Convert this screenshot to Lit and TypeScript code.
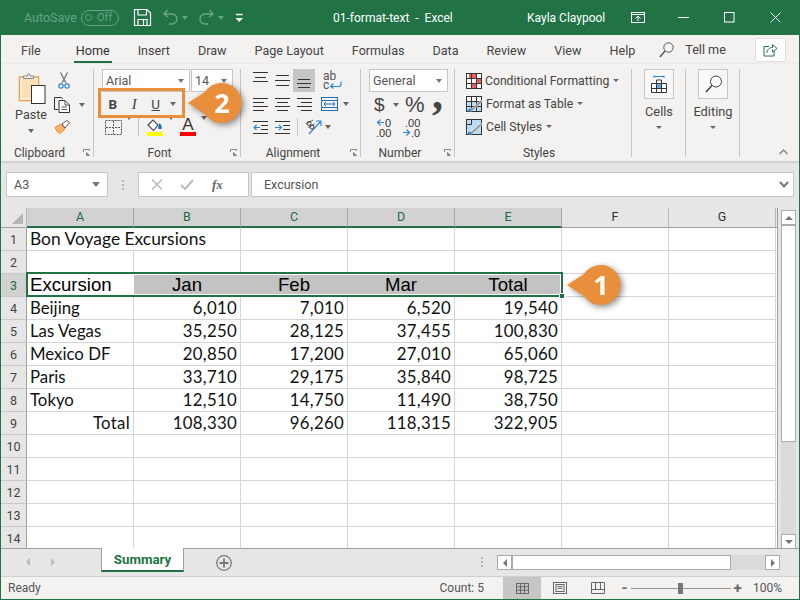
import { LitElement, html, css, svg } from "lit";
import { customElement } from "lit/decorators.js";

const icon = (w: number, h: number, body: unknown) =>
  html`<svg width=${w} height=${h} viewBox="0 0 ${w} ${h}" fill="none" stroke="#444" stroke-width="1">${body}</svg>`;

const lines = (rows: [number, number, number][]) =>
  rows.map(([y, a, b]) => svg`<path d="M${a} ${y + 0.5}H${b}" stroke="#333"/>`);

const I = {
  save: icon(17, 17, svg`<path d="M.5 .5H13L16.5 4V16.5H.5Z" stroke="#fff" stroke-width="1.2"/><path d="M4 .5V6H12.5V.5M4 16.5V10.5H13V16.5M9.5 11V16" stroke="#fff" stroke-width="1.2"/>`),
  undo: icon(15, 17, svg`<path d="M4.5 1 1 5 5 8M1.5 5H9A4.5 4.5 0 0 1 9 15H6" stroke="#6ea58a" stroke-width="1.3"/>`),
  redo: icon(15, 17, svg`<path d="M10.5 1 14 5 10 8M13.500 5H6A4.500 4.500 0 0 0 6 15H9" stroke="#6ea58a" stroke-width="1.3"/>`),
  qat: icon(9, 10, svg`<path d="M1 1.500H7.500" stroke="#fff" stroke-width="1.500"/><path d="M.5 5H8L4.200 9Z" fill="#fff" stroke="none"/>`),
  restore: icon(14, 11, svg`<rect x=".5" y=".5" width="13" height="10" stroke="#fff"/><path d="M1 2.500H13M7 9V4.500M4.500 6.500 7 4 9.500 6.500" stroke="#fff"/>`),
  min: icon(11, 11, svg`<path d="M0 5.500H11" stroke="#fff"/>`),
  max: icon(11, 11, svg`<rect x=".5" y=".5" width="9.500" height="9.500" stroke="#fff"/>`),
  close: icon(11, 11, svg`<path d="M.5 .5 10.500 10.500M10.500 .5 .5 10.500" stroke="#fff"/>`),
  search: icon(15, 16, svg`<circle cx="9.500" cy="5.500" r="4.700" stroke="#555"/><path d="M6 9 1 15" stroke="#555" stroke-width="1.400"/>`),
  share: icon(15, 14, svg`<path d="M6 3.500H1V13H11V8" stroke="#217346"/><path d="M4 10C4 6 7 4.500 9.500 4.500V1.500L14 5.500 9.500 9V6.500" stroke="#217346"/>`),
  paste: icon(29, 33, svg`<rect x="2.500" y="5" width="19" height="23.500" fill="#fff" stroke="#f0a04b" stroke-width="1.500"/><rect x="4.500" y="7" width="15" height="19.500" fill="#fbe0b5" stroke="none"/><path d="M6.500 6.500V4H10.500C10.500 .5 13 .5 13 4H16.500V6.500Z" fill="#f3f2f1" stroke="#888"/><rect x="14.500" y="13.500" width="13.500" height="18" fill="#fff" stroke="#333"/>`),
  cut: icon(12, 17, svg`<path d="M2.500 .5 8 11M9.500 .5 4 11" stroke="#666" stroke-width="1.100"/><circle cx="3" cy="14" r="2.200" stroke="#2b88d8" stroke-width="1.200"/><circle cx="9" cy="14" r="2.200" stroke="#2b88d8" stroke-width="1.200"/>`),
  copy: icon(17, 16, svg`<path d="M4 12.500H.5V.5H7.500L9 2" stroke="#333"/><path d="M5 3.500H11L15.500 8V15.500H5Z" fill="#fff" stroke="#333"/><path d="M11 4V8H15M7.500 10H13M7.500 12.500H13" stroke="#555"/>`),
  brush: icon(17, 15, svg`<path d="M1 8.500 7 5 11 10 6 14.500C4 14 2 11.500 1 8.500Z" fill="#f7b26b" stroke="#ee8a2e"/><path d="M8 5 13 1.500 15.500 3.500 11 9Z" fill="#fff" stroke="#555"/>`),
  borders: icon(17, 15, svg`<rect x=".5" y=".5" width="16" height="14" stroke="#555" stroke-dasharray="2 1"/><path d="M8.500 1V14M1 7.500H16" stroke="#555" stroke-dasharray="2 1"/>`),
  fill: icon(16, 13, svg`<path d="M1 6 6 1 11 6 6.500 11.500Z" fill="#fff" stroke="#444" stroke-width="1.100"/><path d="M12.500 4C14.500 6 15 8 14.500 10H11.500C11 8 11.500 6 12.500 4Z" fill="#106ebe" stroke="none"/>`),
  wrapArrow: icon(13, 8, svg`<path d="M12 .5V3C12 5 11 5.500 9.500 5.500H2M4.500 2.500 1.500 5.500 4.500 7.500" stroke="#2b88d8" stroke-width="1.200"/>`),
  merge: icon(17, 14, svg`<rect x=".5" y=".5" width="16" height="13" stroke="#1f6fb5"/><path d="M1 3.500H16M1 10.500H16" stroke="#1f6fb5"/><path d="M3 7H14M5 5 3 7 5 9M12 5 14 7 12 9" stroke="#1f6fb5"/>`),
  outdent: icon(15, 13, svg`${lines([[0, 0, 15], [4, 8, 15], [8, 8, 15], [12, 0, 15]])}<path d="M7 6.500H1M3.500 4 1 6.500 3.500 9" stroke="#2b88d8" stroke-width="1.200"/>`),
  indent: icon(15, 13, svg`${lines([[0, 0, 15], [4, 8, 15], [8, 8, 15], [12, 0, 15]])}<path d="M0 6.500H6.500M4 4 6.500 6.500 4 9" stroke="#2b88d8" stroke-width="1.200"/>`),
  orient: icon(18, 16, svg`<path d="M4 15 16 2M16 2H11M16 2V7" stroke="#2b88d8" stroke-width="1.200"/><path d="M1 5 8 1M3 8.500 9.500 5" stroke="#555"/><circle cx="4" cy="4.500" r="2" stroke="#444"/><circle cx="7" cy="8" r="2" stroke="#444"/>`),
  arrowL: icon(9, 9, svg`<path d="M8 4.500H1.500M4.500 1.500 1.500 4.500 4.500 7.500" stroke="#2b88d8" stroke-width="1.200"/>`),
  arrowR: icon(9, 9, svg`<path d="M1 4.500H7.500M4.500 1.500 7.500 4.500 4.500 7.500" stroke="#2b88d8" stroke-width="1.200"/>`),
  cond: icon(16, 16, svg`<rect x=".5" y=".5" width="15" height="15" fill="#fff" stroke="#333"/><path d="M3 1H10V5.500H3ZM10 5.500H15V10H10ZM5 10.500H10V15H5Z" fill="#ef5d5d" stroke="none"/><path d="M5.500 1V15M10.500 1V15M1 5.500H15M1 10.500H15" stroke="#333"/>`),
  table: icon(17, 16, svg`<rect x=".5" y=".5" width="15" height="15" fill="#fff" stroke="#333"/><path d="M1 5.500H15V15H1Z" fill="#bcdcf4" stroke="none"/><path d="M5.500 1V15M10.500 1V15M1 5.500H15M1 10.500H15" stroke="#333"/><path d="M3 15 15 4 16.500 5.500 6 15Z" fill="#8b8b8b" stroke="#fff" stroke-width=".5"/><path d="M1.500 15.500C2 13 3 13 4 12.500L5.500 14C5 15 3 15.500 1.500 15.500Z" fill="#2b88d8" stroke="none"/>`),
  styles: icon(17, 16, svg`<rect x=".5" y=".5" width="15" height="15" fill="#bcdcf4" stroke="#333"/><path d="M1 5.500H5.500V1" stroke="#333"/><path d="M3 15 15 4 16.500 5.500 6 15Z" fill="#8b8b8b" stroke="#fff" stroke-width=".5"/><path d="M1.500 15.500C2 13 3 13 4 12.500L5.500 14C5 15 3 15.500 1.500 15.500Z" fill="#2b88d8" stroke="none"/>`),
  cells: icon(16, 18, svg`<path d="M3 1.500H13M3 .5V3M13 .5V3" stroke="#2b88d8"/><rect x="5.500" y="8.500" width="5" height="5" fill="#63a9e6" stroke="none"/><path d="M5.500 5H10.500V8.500H5.500ZM.5 8.500H5.500V17.500H.5ZM10.500 8.500H15.500V17.500H10.500ZM5.500 13.500H10.500V17.500H5.500Z" fill="#fff" stroke="#333"/><path d="M.5 13.500H15.500" stroke="#333"/>`),
  find: icon(17, 18, svg`<circle cx="11" cy="6.500" r="5.500" stroke="#444"/><path d="M7 10.500 1 17" stroke="#444" stroke-width="1.500"/>`),
  launcher: icon(7, 7, svg`<path d="M.5 3V.5H6.500V2" stroke="#888"/><path d="M6.500 6.500H3.500V3.500L6.500 6.500" fill="#888" stroke="#888"/>`),
  x: icon(12, 11, svg`<path d="M1 .5 11 10.500M11 .5 1 10.500" stroke="#bbb" stroke-width="1.500"/>`),
  check: icon(14, 11, svg`<path d="M1 6 5 10 13 1" stroke="#bbb" stroke-width="2"/>`),
  chevron: icon(10, 7, svg`<path d="M1 1 5 5.500 9 1" stroke="#777" stroke-width="2"/>`),
  corner: icon(11, 11, svg`<path d="M11 0V11H0Z" fill="#b5b5b5" stroke="none"/>`),
  plus: icon(16, 16, svg`<circle cx="8" cy="8" r="7.300" stroke="#777" stroke-width="1.200"/><path d="M8 3.500V12.500M3.500 8H12.500" stroke="#777" stroke-width="1.800"/>`),
  collapse: icon(9, 6, svg`<path d="M.5 5 4.500 1 8.500 5" stroke="#888" stroke-width="1.500"/>`),
  normal: icon(13, 11, svg`<rect x=".5" y=".5" width="12" height="10" stroke="#666"/><path d="M4.500 1V10M8.500 1V10M1 3.800H12M1 7.200H12" stroke="#666"/>`),
  layout: icon(14, 12, svg`<rect x=".5" y=".5" width="13" height="11" stroke="#666"/><rect x="3" y="2.500" width="8" height="7" stroke="#666"/><path d="M4.500 4.500H9.500M4.500 6.500H9.500" stroke="#666"/>`),
  pagebreak: icon(14, 12, svg`<path d="M.5 7.500H13.500M.5 .5H13.500V11.500H.5ZM4.500 1V7M9.500 1V7" stroke="#666"/>`),
};

const rows: string[][] = [
  ["Bon Voyage Excursions"],
  [],
  ["Excursion", "Jan", "Feb", "Mar", "Total"],
  ["Beijing", "6,010", "7,010", "6,520", "19,540"],
  ["Las Vegas", "35,250", "28,125", "37,455", "100,830"],
  ["Mexico DF", "20,850", "17,200", "27,010", "65,060"],
  ["Paris", "33,710", "29,175", "35,840", "98,725"],
  ["Tokyo", "12,510", "14,750", "11,490", "38,750"],
  ["Total", "108,330", "96,260", "118,315", "322,905"],
  [], [], [], [], [],
];

@customElement("app-root")
export class AppRoot extends LitElement {
  static styles = css`
    :host { display: block; width: 800px; height: 600px; position: relative; overflow: hidden;
      font-family: Roboto, "Noto Sans", sans-serif; font-size: 12.5px; color: #444; background: #217346; white-space: nowrap; }
    svg { display: block; flex: none; overflow: visible; }
    .title { height: 35px; display: flex; align-items: center; color: #fff; padding-left: 24px; font-size: 12px; }
    .auto { color: #66a285; font-size: 12.5px; width: 50px; }
    .toggle { margin-left: 7px; width: 38px; height: 16px; box-sizing: border-box; border: 1px solid #66a285; border-radius: 8px;
      display: flex; align-items: center; gap: 5px; padding-left: 3px; color: #66a285; font-size: 11px; }
    .toggle i { width: 7px; height: 7px; border: 1px solid #66a285; border-radius: 50%; flex: none; box-sizing: border-box; }
    .m15 { margin-left: 15px; } .m13 { margin-left: 12px; }
    .caret { width: 0; height: 0; flex: none; border-left: 3.5px solid transparent; border-right: 3.5px solid transparent; border-top: 4px solid #666; }
    .title .caret { border-top-color: #66a285; margin-left: 4px; margin-right: 11px; }
    .doc { margin-left: 89px; width: 194px; white-space: pre; }
    .user { width: 104px; }
    .winbtn { width: 46px; display: flex; justify-content: center; }
    .winbtn.first { width: 29px; justify-content: flex-start; }

    .main { background: #e6e6e6; margin: 0 1px; height: 564px; display: flex; flex-direction: column; position: relative; }
    .tabs { height: 29px; flex: none; background: #f3f2f1; display: flex; align-items: center; gap: 28px; padding-left: 20px; position: relative; font-size: 12.6px; }
    .tab { line-height: 31px; height: 29px; box-sizing: border-box; }
    .tab.active { color: #333; margin-left: 7px; position: relative; }
    .tab.active::after { content: ""; position: absolute; left: -2px; right: -2px; bottom: 1px; height: 2px; background: #217346; }
    .tell { display: flex; align-items: center; gap: 11px; margin-left: -4px; }
    .shareBtn { margin-left: auto; margin-right: 13px; width: 31px; height: 24px; box-sizing: border-box; border: 1px solid #e1dfdd; border-radius: 2px; background: #fff; display: flex; align-items: center; justify-content: center; }

    .ribbon { height: 97px; flex: none; background: #f3f2f1; display: flex; box-shadow: 0 1px 3px rgba(0,0,0,.18); position: relative; z-index: 1; }
    .group { flex: none; box-sizing: border-box; display: flex; flex-direction: column; position: relative; padding-top: 5px; }
    .group::after { content: ""; position: absolute; right: 0; top: 5px; bottom: 4px; width: 1px; background: #c8c6c4; }
    .g-clip { width: 93px; } .g-font { width: 147px; } .g-align { width: 120px; } .g-num { width: 94px; } .g-styles { width: 177px; } .g-cells { width: 54px; } .g-edit { width: 54px; }
    .body { flex: 1; display: flex; flex-direction: column; }
    .glabel { height: 17px; display: flex; align-items: center; padding-right: 4px; font-size: 12px; }
    .glabel span { flex: 1; text-align: center; padding-right: 5px; }
    .rowi { display: flex; align-items: center; }

    .clipbody { flex-direction: row; padding-left: 11px; }
    .pastecol { width: 38px; display: flex; flex-direction: column; align-items: center; padding-top: 3px; }
    .pastecol .lbl { margin-top: 2px; line-height: 16px; }
    .pastecol .caret { margin-top: 6px; }
    .smallcol { display: flex; flex-direction: column; margin-left: 4px; }
    .s1 { margin: 3px 0 0 4px; } .s2 { margin-top: 8px; gap: 8px; } .s3 { margin-top: 6px; }

    .fontbody { padding-left: 8px; }
    .combo { background: #fff; border: 1px solid #c8c6c4; box-sizing: border-box; height: 23px; display: flex; align-items: center; justify-content: space-between; padding: 0 5px 0 3px; color: #555; }
    .combo .caret { border-top-color: #777; }
    .c-font { width: 88px; } .c-size { width: 42px; margin-left: 1px; }
    .biu { height: 24px; padding-left: 0; }
    .biu span { width: 21.5px; text-align: center; color: #444; font-size: 13.5px; }
    .biu .b { font-weight: 700; } .biu .i { font-style: italic; font-family: "Liberation Serif", serif; font-size: 15px; } .biu .u { text-decoration: underline; }
    .biu .caret { margin-left: 3px; }
    .fontrow3 { margin-top: 2px; padding-left: 3px; height: 18px; }
    .fontrow3 .bcaret { margin-left: 4px; }
    .vsep { width: 1px; height: 18px; background: #c8c6c4; flex: none; }
    .fontrow3 .vsep { margin-left: 6px; }
    .swatch { display: flex; flex-direction: column; width: 16px; }
    .swatch b { display: block; height: 4px; }
    .swatch .yellow { background: #ffff00; } .swatch .red { background: #ff0000; }
    .sfill { margin-left: 8px; } .sa { margin-left: 6px; } .swcaret { margin-left: 5px; }
    .ya { font-size: 17px; line-height: 14px; text-align: center; color: #333; font-family: "Liberation Sans", sans-serif; height: 14px; }
    .highlight { position: absolute; left: 4px; top: 24px; width: 87px; height: 30px; box-sizing: border-box; border: 3px solid #e98f3c; }

    .alignbody { padding-left: 12px; }
    .agrid { display: grid; grid-template-columns: repeat(4, 22px); grid-template-rows: 23px 24px 22px; align-items: center; justify-items: start; }
    .topa { align-self: start; margin-top: 3px; }
    .sel { background: #c8c6c4; width: 22px; height: 23px; margin-left: -4px; display: flex; align-items: flex-start; justify-content: center; padding-top: 10px; box-sizing: border-box; }
    .wrap { display: flex; flex-direction: column; line-height: 9px; color: #555; margin-left: 4px; font-size: 12px; }
    .wrapl { display: flex; align-items: center; line-height: 9px; }
    .mergeR { display: flex; align-items: center; gap: 5px; margin-left: 2px; }
    .sepcell { display: flex; align-items: center; gap: 7px; }
    .sepcell .caret { margin-left: -5px; }

    .numbody { padding-left: 8px; }
    .c-gen { width: 79px; }
    .numrow2 { height: 26px; padding-left: 5px; color: #444; font-family: "Liberation Sans", sans-serif; }
    .dollar { font-size: 19px; width: 19px; } .pct { font-size: 22px; margin-left: 6px; width: 27px; }
    .comma { font-size: 44px; font-weight: 700; line-height: 14px; font-family: "Liberation Serif", serif; margin-top: -20px; }
    .numrow3 { padding-left: 7px; gap: 7px; }
    .dec { display: grid; grid-template-columns: 9px auto; font-size: 11px; line-height: 10px; color: #333; width: 19px; font-family: "Liberation Sans", sans-serif; }
    .dec .full { grid-column: 1 / 3; }

    .stylebody { padding-left: 11px; }
    .sr { height: 23px; display: flex; align-items: center; gap: 3px; color: #444; font-size: 12.2px; }
    .sr .caret { margin-left: 1px; border-left-width: 3px; border-right-width: 3px; border-top-width: 3px; }

    .bigbody { align-items: center; }
    .big { width: 30px; height: 30px; box-sizing: border-box; border: 1px solid #c8c6c4; background: #f9f8f7; display: flex; align-items: center; justify-content: center; }
    .bl { margin-top: 4px; line-height: 18px; font-size: 12.8px; }
    .bigbody .caret { margin-top: 5px; border-top-width: 3px; border-left-width: 3px; border-right-width: 3px; }
    .collapse { flex: 1; display: flex; align-items: flex-end; justify-content: flex-end; padding: 0 11px 6px 0; }

    .fbar { height: 47px; flex: none; display: flex; align-items: flex-start; padding: 11px 5px 0 5px; box-sizing: border-box; }
    .fbox { height: 25px; background: #fff; border: 1px solid #c8c6c4; box-sizing: border-box; display: flex; align-items: center; color: #555; }
    .namebox { width: 102px; padding: 0 7px; justify-content: space-between; }
    .namebox .caret { border-top-color: #777; border-left-width: 4px; border-right-width: 4px; border-top-width: 5px; }
    .dots { width: 30px; display: flex; flex-direction: column; gap: 2px; align-items: center; height: 25px; justify-content: center; }
    .dots i { width: 2px; height: 2px; background: #b5b5b5; display: block; }
    .fxbox { width: 111px; padding-left: 12px; gap: 17px; }
    .fx { font-family: "Liberation Serif", serif; font-style: italic; font-weight: 700; font-size: 13px; color: #666; margin-left: 1px; }
    .input { flex: 1; margin-left: 2px; padding: 0 4px 0 12px; justify-content: space-between; }

    .sheet { flex: 1; display: flex; min-height: 0; position: relative; }
    .grid { display: grid; grid-template-columns: 26px repeat(7, 107px) 2px; grid-template-rows: 20px repeat(14, 23px); width: 777px; background: #fff; flex: none; align-self: flex-start; position: relative; }
    .grid > div { box-sizing: border-box; }
    .ch { background: #e6e6e6; border-right: 1px solid #b9b9b9; text-align: center; line-height: 18px; color: #333; border-bottom: 1px solid #9f9f9f; }
    .ch.on { background: #d2d2d2; color: #1d6b42; border-bottom: 2px solid #217346; border-right-color: #a8a8a8; }
    .corner { background: #e6e6e6; display: flex; align-items: flex-end; justify-content: flex-end; padding: 0 3px 3px 0; border-right: 1px solid #b9b9b9; border-bottom: 1px solid #9f9f9f; }
    .rh { background: #e6e6e6; border-right: 1px solid #9f9f9f; border-bottom: 1px solid #c8c8c8; text-align: center; line-height: 23px; color: #444; }
    .rh.on { background: #d2d2d2; color: #1d6b42; }
    .c { border-right: 1px solid #d4d4d4; border-bottom: 1px solid #d4d4d4; padding: 0 3px; line-height: 22px; font-size: 16.8px; color: #111; font-family: "Lato", "Noto Sans", sans-serif; }
    .c.r { text-align: right; letter-spacing: .3px; }
    .c.over { border-right-color: transparent; font-size: 17.4px; }
    .c.h { font-family: "Liberation Sans", sans-serif; font-size: 18.6px; text-align: center; background: #c3c3c3; border-color: #c3c3c3; color: #000; line-height: 22px; }
    .c.h.first { background: #fff; text-align: left; border-color: #fff; }
    .end { background: #fff; border-bottom: 1px solid #d4d4d4; border-right: 1px solid #9f9f9f; }
    .headend { background: #e6e6e6; border-bottom: 1px solid #9f9f9f; border-right: 1px solid #9f9f9f; }
    .selbox { position: absolute; left: 25px; top: 64px; width: 537px; height: 25px; border: 2px solid #217346; box-shadow: inset 0 0 0 1px #fff; pointer-events: none; }
    .handle { position: absolute; right: -4px; bottom: -4px; width: 6px; height: 6px; box-sizing: border-box; background: #217346; border: 1px solid #fff; }
    .vscroll { margin: 2px 0 0 3px; width: 15px; height: 339px; display: flex; flex-direction: column; background: #dbdbdb; }
    .sb { background: #fff; border: 1px solid #ababab; box-sizing: border-box; display: flex; align-items: center; justify-content: center; flex: none; }
    .up { width: 0; height: 0; border-left: 4px solid transparent; border-right: 4px solid transparent; border-bottom: 4px solid #777; }
    .down { width: 0; height: 0; border-left: 4px solid transparent; border-right: 4px solid transparent; border-top: 4px solid #777; }
    .left { width: 0; height: 0; border-top: 4px solid transparent; border-bottom: 4px solid transparent; border-right: 4px solid #777; }
    .right { width: 0; height: 0; border-top: 4px solid transparent; border-bottom: 4px solid transparent; border-left: 4px solid #777; }
    .vbtn { height: 15px; } .vthumb { height: 217px; } .spacer { flex: 1; }

    .tabbar { height: 29px; flex: none; display: flex; align-items: flex-start; background: #e6e6e6; border-top: 1px solid #9f9f9f; box-sizing: border-box; border-bottom: 1px solid #cfcfcf; margin-top: -1px; position: relative; }
    .navs { width: 100px; display: flex; gap: 21px; padding: 9px 0 0 25px; box-sizing: border-box; }
    .left.dim { border-right-color: #bbb; } .right.dim { border-left-color: #bbb; }
    .sumtab { width: 83px; height: 24px; margin-top: -1px; background: #fff; border: 1px solid #9f9f9f; border-top: 0; border-bottom: 2px solid #217346; box-sizing: border-box; text-align: center; font-weight: 700; color: #217346; font-size: 13.3px; line-height: 24px; }
    .addbtn { margin: 6px 0 0 32px; }
    .hdots { margin-left: 249px; display: flex; flex-direction: column; gap: 2px; padding-top: 8px; }
    .hdots i { width: 2px; height: 2px; background: #b5b5b5; display: block; }
    .hscroll { margin: 6px 0 0 14px; display: flex; height: 15px; }
    .hbtn { width: 15px; height: 15px; } .hthumb { width: 219px; height: 15px; }
    .htrack { width: 34px; background: #dbdbdb; }

    .status { height: 22px; flex: none; background: #f3f2f1; display: flex; align-items: center; padding-left: 7px; color: #555; font-size: 12px; }
    .count { margin-left: auto; margin-right: 19px; }
    .vb { width: 38px; height: 22px; display: flex; align-items: center; justify-content: center; }
    .vb.on { background: #c8c6c4; }
    .zoombar { display: flex; align-items: center; margin-left: 2px; gap: 1px; }
    .zm { font-size: 15px; font-weight: 700; color: #666; width: 11px; text-align: center; line-height: 15px; }
    .track { width: 100px; flex: none; height: 1px; background: #999; position: relative; }
    .track i { position: absolute; left: 47px; top: -5px; width: 5px; height: 11px; background: #777; }
    .pctz { width: 56px; padding-left: 10px; box-sizing: border-box; }

    .bottomline { height: 1px; background: #217346; }
    .callout { position: absolute; width: 58px; height: 44px; filter: drop-shadow(2px 2px 3px rgba(0,0,0,.45)); z-index: 5; }
    .callout span { position: absolute; left: 15px; top: 0; width: 40px; text-align: center; color: #fff; font: 700 27px/40px "Open Sans", sans-serif; }
    .c1 { left: 566px; top: 265px; } .c2 { left: 187px; top: 83px; }
  `;

  private caret() { return html`<i class="caret"></i>`; }

  private ab() {
    return html`<div class="wrap"><div>ab</div><div class="wrapl">c${I.wrapArrow}</div></div>`;
  }

  private callout(n: string, cls: string) {
    return html`<div class="callout ${cls}"><svg width="58" height="42" viewBox="0 0 58 42"><path d="M1 20 L18 9 A20 20 0 1 1 18 31 Z" fill="#e98f3c" stroke="none"/></svg><span>${n}</span></div>`;
  }

  private grid() {
    const cols = ["A", "B", "C", "D", "E", "F", "G"];
    return html`<div class="grid">
      <div class="corner">${I.corner}</div>
      ${cols.map((c, i) => html`<div class="ch ${i < 5 ? "on" : ""}">${c}</div>`)}
      <div class="headend"></div>
      ${rows.map((r, ri) => html`
        <div class="rh ${ri === 2 ? "on" : ""}">${ri + 1}</div>
        ${cols.map((_, ci) => {
          const t = r[ci] ?? "";
          let cls = "c";
          if (ri === 2 && ci < 5) cls += " h" + (ci === 0 ? " first" : "");
          else if (ci > 0 || t === "Total") cls += " r";
          if (ri === 0 && ci === 0) cls += " over";
          return html`<div class=${cls}>${t}</div>`;
        })}
        <div class="end"></div>`)}
      <div class="selbox"><div class="handle"></div></div>
    </div>`;
  }

  render() {
    return html`
      <div class="title">
        <span class="auto">AutoSave</span>
        <div class="toggle"><i></i>Off</div>
        <span class="m15">${I.save}</span>
        <span class="m13">${I.undo}</span>${this.caret()}
        ${I.redo}${this.caret()}
        <span>${I.qat}</span>
        <span class="doc">01-format-text  -  Excel</span>
        <span class="user">Kayla Claypool</span>
        <span class="winbtn first">${I.restore}</span>
        <span class="winbtn">${I.min}</span>
        <span class="winbtn">${I.max}</span>
        <span class="winbtn">${I.close}</span>
      </div>
      <div class="main">
        <div class="tabs">
          <span class="tab">File</span>
          <span class="tab active">Home</span>
          <span class="tab">Insert</span>
          <span class="tab">Draw</span>
          <span class="tab">Page Layout</span>
          <span class="tab">Formulas</span>
          <span class="tab">Data</span>
          <span class="tab">Review</span>
          <span class="tab">View</span>
          <span class="tab">Help</span>
          <span class="tell">${I.search}<span>Tell me</span></span>
          <span class="shareBtn">${I.share}</span>
        </div>
        <div class="ribbon">
          <div class="group g-clip">
            <div class="body clipbody">
              <div class="pastecol">${I.paste}<span class="lbl">Paste</span>${this.caret()}</div>
              <div class="smallcol">
                <span class="s1">${I.cut}</span>
                <span class="rowi s2">${I.copy}${this.caret()}</span>
                <span class="s3">${I.brush}</span>
              </div>
            </div>
            <div class="glabel"><span>Clipboard</span>${I.launcher}</div>
          </div>
          <div class="group g-font">
            <div class="body fontbody">
              <div class="rowi"><div class="combo c-font">Arial${this.caret()}</div><div class="combo c-size">14${this.caret()}</div></div>
              <div class="rowi biu"><span class="b">B</span><span class="i">I</span><span class="u">U</span>${this.caret()}</div>
              <div class="rowi fontrow3">
                ${I.borders}<span class="bcaret">${this.caret()}</span>
                <span class="vsep"></span>
                <span class="swatch sfill">${I.fill}<b class="yellow"></b></span>
                <span class="swcaret">${this.caret()}</span>
                <span class="swatch sa"><span class="ya">A</span><b class="red"></b></span>
                <span class="swcaret">${this.caret()}</span>
              </div>
            </div>
            <div class="glabel"><span>Font</span>${I.launcher}</div>
            <div class="highlight"></div>
          </div>
          <div class="group g-align">
            <div class="body alignbody">
              <div class="agrid">
                <span class="topa">${icon(15, 11, lines([[0, 0, 15], [5, 2, 13], [9, 0, 15]]))}</span>
                ${icon(15, 11, lines([[0, 1, 14], [5, 0, 15], [10, 1, 14]]))}
                <div class="sel">${icon(14, 9, lines([[0, 1, 13], [4, 0, 14], [8, 1, 13]]))}</div>
                ${this.ab()}
                ${icon(15, 13, lines([[0, 0, 15], [4, 0, 11], [8, 0, 15], [12, 0, 11]]))}
                ${icon(15, 13, lines([[0, 0, 15], [4, 2, 13], [8, 0, 15], [12, 2, 13]]))}
                ${icon(15, 13, lines([[0, 0, 15], [4, 4, 15], [8, 0, 15], [12, 4, 15]]))}
                <div class="mergeR">${I.merge}${this.caret()}</div>
                ${I.outdent}
                ${I.indent}
                <div class="sepcell"><span class="vsep"></span>${I.orient}${this.caret()}</div>
              </div>
            </div>
            <div class="glabel"><span>Alignment</span>${I.launcher}</div>
          </div>
          <div class="group g-num">
            <div class="body numbody">
              <div class="combo c-gen">General${this.caret()}</div>
              <div class="rowi numrow2"><span class="dollar">$</span>${this.caret()}<span class="pct">%</span><span class="comma">,</span></div>
              <div class="rowi numrow3">
                <div class="dec">${I.arrowL}<span>0</span><span class="full">.00</span></div>
                <div class="dec"><span class="full">&nbsp;.00</span>${I.arrowR}<span>.0</span></div>
              </div>
            </div>
            <div class="glabel"><span>Number</span>${I.launcher}</div>
          </div>
          <div class="group g-styles">
            <div class="body stylebody">
              <div class="sr">${I.cond}<span>Conditional Formatting</span>${this.caret()}</div>
              <div class="sr">${I.table}<span>Format as Table</span>${this.caret()}</div>
              <div class="sr">${I.styles}<span>Cell Styles</span>${this.caret()}</div>
            </div>
            <div class="glabel"><span>Styles</span></div>
          </div>
          <div class="group g-cells">
            <div class="body bigbody"><div class="big">${I.cells}</div><div class="bl">Cells</div>${this.caret()}</div>
            <div class="glabel"></div>
          </div>
          <div class="group g-edit">
            <div class="body bigbody"><div class="big">${I.find}</div><div class="bl">Editing</div>${this.caret()}</div>
            <div class="glabel"></div>
          </div>
          <div class="collapse">${I.collapse}</div>
        </div>
        <div class="fbar">
          <div class="fbox namebox">A3${this.caret()}</div>
          <div class="dots"><i></i><i></i><i></i></div>
          <div class="fbox fxbox">${I.x}${I.check}<span class="fx">fx</span></div>
          <div class="fbox input">Excursion${I.chevron}</div>
        </div>
        <div class="sheet">
          ${this.grid()}
          <div class="vscroll">
            <div class="sb vbtn"><i class="up"></i></div>
            <div class="sb vthumb"></div>
            <div class="spacer"></div>
            <div class="sb vbtn"><i class="down"></i></div>
          </div>
        </div>
        <div class="tabbar">
          <div class="navs"><i class="left dim"></i><i class="right dim"></i></div>
          <div class="sumtab">Summary</div>
          <div class="addbtn">${I.plus}</div>
          <div class="hdots"><i></i><i></i><i></i></div>
          <div class="hscroll">
            <div class="sb hbtn"><i class="left"></i></div>
            <div class="sb hthumb"></div>
            <div class="htrack"></div>
            <div class="sb hbtn"><i class="right"></i></div>
          </div>
        </div>
        <div class="status">
          <span>Ready</span>
          <span class="count">Count: 5</span>
          <span class="vb on">${I.normal}</span>
          <span class="vb">${I.layout}</span>
          <span class="vb">${I.pagebreak}</span>
          <div class="zoombar"><span class="zm">-</span><div class="track"><i></i></div><span class="zm">+</span></div>
          <span class="pctz">100%</span>
        </div>
      </div>
      <div class="bottomline"></div>
      ${this.callout("1", "c1")}
      ${this.callout("2", "c2")}
    `;
  }
}
